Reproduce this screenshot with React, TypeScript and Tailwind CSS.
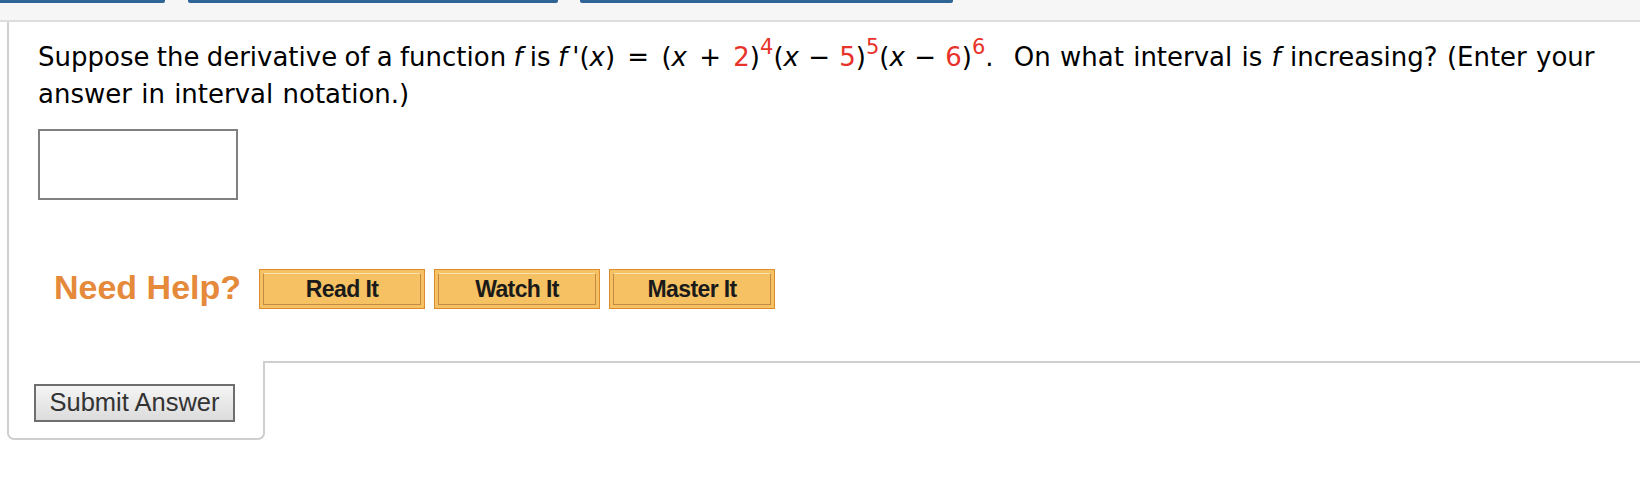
import React from "react";

const Red = ({ children }: { children: React.ReactNode }) => (
  <span className="text-[#e8332a]">{children}</span>
);

const Sup = ({ children }: { children: React.ReactNode }) => (
  <sup className="-top-[12px] text-[21px] text-[#e8332a]">{children}</sup>
);

const HelpButton = ({ label }: { label: string }) => (
  <button className="h-[40px] w-[166px] border border-[#dc8c2f] bg-[#f5c162] p-[3px]">
    <span className="flex h-full w-full items-center justify-center border border-[#c58a44] border-t-[#fbe1ad] font-['Liberation_Sans'] text-[23px] font-bold tracking-[-0.6px] text-[#1a1a1a]">
      {label}
    </span>
  </button>
);

export default function App() {
  return (
    <div className="min-h-screen w-full bg-white">
      {/* top strip */}
      <div className="flex h-[22px] items-start border-b-2 border-[#dddddd] bg-[#f6f6f6]">
        <div className="h-[3px] w-[165px] rounded-br-[2px] bg-[#2f6496]" />
        <div className="ml-[23px] h-[3px] w-[370px] rounded-b-[2px] bg-[#2f6496]" />
        <div className="ml-[22px] h-[3px] w-[373px] rounded-b-[2px] bg-[#2f6496]" />
      </div>

      <div className="pl-[7px]">
        {/* question box */}
        <div className="h-[339px] border-l-2 border-[#cfcfcf] pl-[29px] pt-[17px]">
          <p className="font-['DejaVu_Sans'] text-[26px] leading-[37px] text-black [word-spacing:-1px]">
            Suppose the derivative of a function <i>f</i> is <i>f</i>&#8201;'(<i>x</i>)
            <span className="mx-[5px]"> = </span>(<i>x</i>
            <span className="mx-[5px]"> + </span>
            <Red>2</Red>)<Sup>4</Sup>(<i>x</i>
            <span className="mx-[2px]"> − </span>
            <Red>5</Red>)<Sup>5</Sup>(<i>x</i>
            <span className="mx-[2px]"> − </span>
            <Red>6</Red>)<Sup>6</Sup>.{" "}
            <span className="ml-[13px] [word-spacing:1px]">
              On what interval is <i>f</i> increasing? (Enter your answer in interval notation.)
            </span>
          </p>
          <div className="mt-[16px] h-[71px] w-[200px] border-2 border-[#808080] bg-white" />
          <div className="mt-[69px] flex items-center">
            <span className="mb-[5px] ml-[16px] mr-[18px] font-['Liberation_Sans'] text-[34px] font-bold leading-none text-[#e5893a]">
              Need Help?
            </span>
            <div className="flex gap-[9px]">
              <HelpButton label="Read It" />
              <HelpButton label="Watch It" />
              <HelpButton label="Master It" />
            </div>
          </div>
        </div>

        {/* submit tab */}
        <div className="flex">
          <div className="h-[79px] w-[258px] rounded-b-[7px] border-2 border-t-0 border-[#cfcfcf] pl-[25px] pt-[23px]">
            <button className="h-[38px] w-[201px] border-2 border-[#6e6e6e] bg-gradient-to-b from-[#f5f5f5] to-[#dcdcdc] font-['Liberation_Sans'] text-[25.5px] leading-none text-[#333333]">
              Submit Answer
            </button>
          </div>
          <div className="flex-1 border-t-2 border-[#cfcfcf]" />
        </div>
      </div>
    </div>
  );
}
